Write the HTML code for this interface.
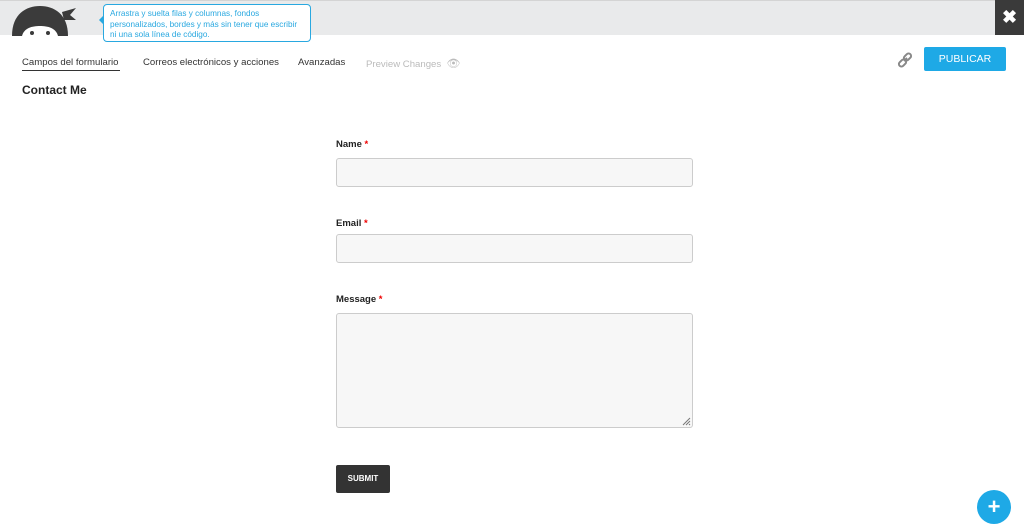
<!DOCTYPE html>
<html><head><meta charset="utf-8"><style>
*{box-sizing:border-box;margin:0;padding:0}
body{width:1024px;height:529px;overflow:hidden;background:#fff;font-family:"Liberation Sans",sans-serif;position:relative;color:#333}
.top{position:absolute;left:0;top:0;width:1024px;height:35px;background:#e9eaeb;border-top:1px solid #d4d4d4}
.close{position:absolute;right:0;top:0;width:29px;height:35px;background:#3a3a3a;color:#fff;font-size:18px;font-weight:bold;text-align:center;line-height:35px}
.tip{position:absolute;left:103px;top:4px;width:208px;height:38px;border:1px solid #29a8e0;border-radius:4px;background:#fff;font-size:8.2px;line-height:10.5px;color:#29a8e0;padding:4px 6px 0 6px}
.tip:before{content:"";position:absolute;left:-5px;top:11px;border:4px solid transparent;border-right-color:#29a8e0;border-left:0}
.nav{position:absolute;top:57px;font-size:9.6px;color:#333;white-space:nowrap}
.field{position:absolute;left:336px;width:357px;background:#f7f7f7;border:1px solid #ccc;border-radius:3px}
.lbl{position:absolute;left:336px;font-size:9.5px;font-weight:bold;color:#222}
.lbl span{color:#e00}
</style></head><body>
<div class="top"></div>
<svg style="position:absolute;left:8px;top:4px" width="72" height="32" viewBox="0 0 72 32">
<path d="M4 32 C4 10 18 2 32 2 C46 2 60 10 60 32 Z" fill="#3b3b3b"/>
<path d="M54 8 L68 4 L62 11 L68 16 L56 16 Z" fill="#3b3b3b"/>
<path d="M14 32 C16 24 24 22 32 22 C40 22 48 24 50 32 Z" fill="#fff"/>
<circle cx="24" cy="29" r="2" fill="#3b3b3b"/><circle cx="40" cy="29" r="2" fill="#3b3b3b"/>
</svg>
<div class="close">✖</div>
<div class="tip">Arrastra y suelta filas y columnas, fondos<br>personalizados, bordes y más sin tener que escribir<br>ni una sola línea de código.</div>
<div class="nav" style="left:22px">Campos del formulario</div>
<div style="position:absolute;left:22px;top:70px;width:98px;height:1px;background:#333"></div>
<div class="nav" style="left:143px">Correos electrónicos y acciones</div>
<div class="nav" style="left:298px">Avanzadas</div>
<div class="nav" style="left:366px;color:#bbb">Preview Changes &nbsp;<span style="font-size:11px">👁</span></div>
<svg style="position:absolute;left:897px;top:52px" width="16" height="16" viewBox="0 0 16 16" fill="none" stroke="#888" stroke-width="2"><path d="M7 9 L10 6"/><rect x="8" y="1" width="5" height="8" rx="2.5" transform="rotate(45 10.5 5)"/><rect x="3" y="7" width="5" height="8" rx="2.5" transform="rotate(45 5.5 11)"/></svg>
<div style="position:absolute;left:924px;top:47px;width:82px;height:24px;background:#1ea9e6;border-radius:2px;color:#fff;font-size:10.5px;text-align:center;line-height:24px">PUBLICAR</div>
<div style="position:absolute;left:22px;top:83px;font-size:12px;font-weight:bold;color:#222">Contact Me</div>
<div class="lbl" style="top:139px">Name <span>*</span></div>
<div class="field" style="top:158px;height:29px"></div>
<div class="lbl" style="top:218px">Email <span>*</span></div>
<div class="field" style="top:234px;height:29px"></div>
<div class="lbl" style="top:294px">Message <span>*</span></div>
<div class="field" style="top:313px;height:115px;width:357px"></div>
<svg style="position:absolute;left:682px;top:417px" width="9" height="9"><path d="M8 1L1 8M8 4L4 8M8 7L7 8" stroke="#777"/></svg>
<div style="position:absolute;left:336px;top:465px;width:54px;height:28px;background:#333;border-radius:2px;color:#fff;font-size:8px;font-weight:bold;text-align:center;line-height:28px">SUBMIT</div>
<div style="position:absolute;left:977px;top:490px;width:34px;height:34px;border-radius:50%;background:#1ea9e6;color:#fff;font-size:22px;font-weight:bold;text-align:center;line-height:34px">+</div>
</body></html>
